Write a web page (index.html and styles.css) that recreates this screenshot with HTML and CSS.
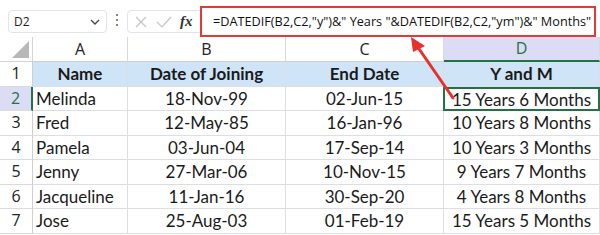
FILE: index.html
```html
<!DOCTYPE html>
<html lang="en">
<head>
    <meta charset="UTF-8">
    <meta name="viewport" content="width=device-width, initial-scale=1.0">
    <title>DATEDIF Years and Months</title>
    <link rel="stylesheet" href="styles.css">
</head>
<body>
    <!-- 수식 입력줄 -->
    <div class="topbar">
        <div class="namebox">
            <span>D2</span>
            <svg class="chev" width="10" height="6" viewBox="0 0 10 6"><path d="M1 1 L5 5 L9 1" fill="none" stroke="#444" stroke-width="1.3"/></svg>
        </div>
        <div class="sep"><i></i><i></i><i></i></div>
        <div class="btns">
            <svg width="14" height="14" viewBox="0 0 14 14"><path d="M2 2 L12 12 M12 2 L2 12" stroke="#c4c4cc" stroke-width="1.2"/></svg>
            <svg width="16" height="14" viewBox="0 0 16 14"><path d="M1 7 L6 12 L15 2" fill="none" stroke="#c4c4cc" stroke-width="1.2"/></svg>
            <span class="fx">fx</span>
        </div>
        <div class="formula">=DATEDIF(B2,C2,"y")&amp;" Years "&amp;DATEDIF(B2,C2,"ym")&amp;" Months"</div>
    </div>

    <!-- 시트 -->
    <div class="sheet">
        <div class="corner"><span class="tri"></span></div>
        <div class="colhd">A</div>
        <div class="colhd">B</div>
        <div class="colhd">C</div>
        <div class="colhd sel">D</div>

        <div class="rowhd">1</div>
        <div class="cell head">Name</div>
        <div class="cell head">Date of Joining</div>
        <div class="cell head">End Date</div>
        <div class="cell head">Y and M</div>

        <div class="rowhd sel">2</div>
        <div class="cell left">Melinda</div>
        <div class="cell">18-Nov-99</div>
        <div class="cell">02-Jun-15</div>
        <div class="cell active">15 Years 6 Months</div>

        <div class="rowhd">3</div>
        <div class="cell left">Fred</div>
        <div class="cell">12-May-85</div>
        <div class="cell">16-Jan-96</div>
        <div class="cell">10 Years 8 Months</div>

        <div class="rowhd">4</div>
        <div class="cell left">Pamela</div>
        <div class="cell">03-Jun-04</div>
        <div class="cell">17-Sep-14</div>
        <div class="cell">10 Years 3 Months</div>

        <div class="rowhd">5</div>
        <div class="cell left">Jenny</div>
        <div class="cell">27-Mar-06</div>
        <div class="cell">10-Nov-15</div>
        <div class="cell">9 Years 7 Months</div>

        <div class="rowhd">6</div>
        <div class="cell left">Jacqueline</div>
        <div class="cell">11-Jan-16</div>
        <div class="cell">30-Sep-20</div>
        <div class="cell">4 Years 8 Months</div>

        <div class="rowhd">7</div>
        <div class="cell left">Jose</div>
        <div class="cell">25-Aug-03</div>
        <div class="cell">01-Feb-19</div>
        <div class="cell">15 Years 5 Months</div>
    </div>

    <!-- 빨간 화살표 (겹침) -->
    <svg class="arrow" width="600" height="235" viewBox="0 0 600 235">
        <path d="M453 98 L417 46" stroke="#e8302a" stroke-width="3" stroke-linecap="round"/>
        <path d="M411 37 L425 46 L413 52 Z" fill="#e8302a"/>
    </svg>
</body>
</html>
```

FILE: styles.css
```css
/* 기본 */
body {
    margin: 0;
    width: 600px;
    height: 235px;
    overflow: hidden;
    position: relative;
    background: #fff;
    font-family: Lato, "Open Sans", sans-serif;
    color: #1a1a1a;
}

/* 수식 입력줄 */
.topbar {
    height: 37px;
    display: flex;
    align-items: flex-start;
    padding-left: 8px;
    box-sizing: border-box;
}

.namebox {
    width: 99px;
    height: 23px;
    margin-top: 10px;
    border: 1px solid #e2e2ee;
    border-radius: 4px;
    box-sizing: border-box;
    display: flex;
    align-items: center;
    justify-content: space-between;
    padding: 0 6px 0 5px;
    font-family: "Open Sans", sans-serif;
    font-size: 12px;
    color: #222;
}

.sep {
    width: 20px;
    margin-top: 14px;
    display: flex;
    flex-direction: column;
    align-items: center;
    gap: 3px;
}

.sep i {
    width: 2px;
    height: 2px;
    background: #888;
}

.btns {
    width: 80px;
    height: 23px;
    margin-top: 10px;
    border: 1px solid #e2e2ee;
    border-radius: 4px;
    box-sizing: border-box;
    display: flex;
    align-items: center;
    gap: 8px;
    padding-left: 6px;
}

.fx {
    font-family: "Liberation Serif", serif;
    font-style: italic;
    font-weight: bold;
    font-size: 15px;
    color: #333;
}

.formula {
    position: relative;
    z-index: 1;
    margin-left: -7px;
    margin-top: 6px;
    width: 396px;
    height: 31px;
    border: 2px solid #e53935;
    box-sizing: border-box;
    background: #fff;
    font-family: "Open Sans", sans-serif;
    font-size: 12.7px;
    line-height: 27px;
    padding-left: 11px;
    white-space: nowrap;
    overflow: hidden;
    color: #111;
}

/* 시트 */
.sheet {
    display: grid;
    grid-template-columns: 33px 95px 158px 158px 156px;
    grid-template-rows: 25px repeat(7, 24.5px);
}

.corner {
    border-right: 1px solid #d4d4d4;
    border-bottom: 1px solid #d4d4d4;
    position: relative;
}

.tri {
    position: absolute;
    right: 3px;
    bottom: 3px;
    width: 0;
    height: 0;
    border-left: 17px solid transparent;
    border-bottom: 17px solid #b8b8b8;
}

.colhd {
    border-right: 1px solid #dadada;
    border-bottom: 1px solid #cfcfcf;
    text-align: center;
    font-family: "Open Sans", sans-serif;
    font-size: 16px;
    line-height: 24px;
    color: #222;
}

.colhd.sel {
    background: #dcdcf5;
    color: #217346;
    border-bottom: 2px solid #217346;
    line-height: 23px;
}

.rowhd {
    border-right: 1px solid #cfcfcf;
    border-bottom: 1px solid #dadada;
    text-align: center;
    font-family: "Open Sans", sans-serif;
    font-size: 16px;
    line-height: 23px;
    color: #222;
}

.rowhd.sel {
    background: #dcdcf5;
    color: #217346;
    border-right: 2px solid #217346;
}

.cell {
    border-right: 1px solid #dddde6;
    border-bottom: 1px solid #dddde6;
    text-align: center;
    font-size: 17px;
    line-height: 23px;
    white-space: nowrap;
    overflow: hidden;
}

.cell.left {
    text-align: left;
    padding-left: 3px;
}

.cell.head {
    background: #cfe4f7;
    font-weight: bold;
}

.cell.active {
    border: 2px solid #217346;
    line-height: 21px;
    margin-left: -1px;
}

/* 화살표 겹침 */
.arrow {
    position: absolute;
    left: 0;
    top: 0;
    z-index: 2;
    pointer-events: none;
}
```
